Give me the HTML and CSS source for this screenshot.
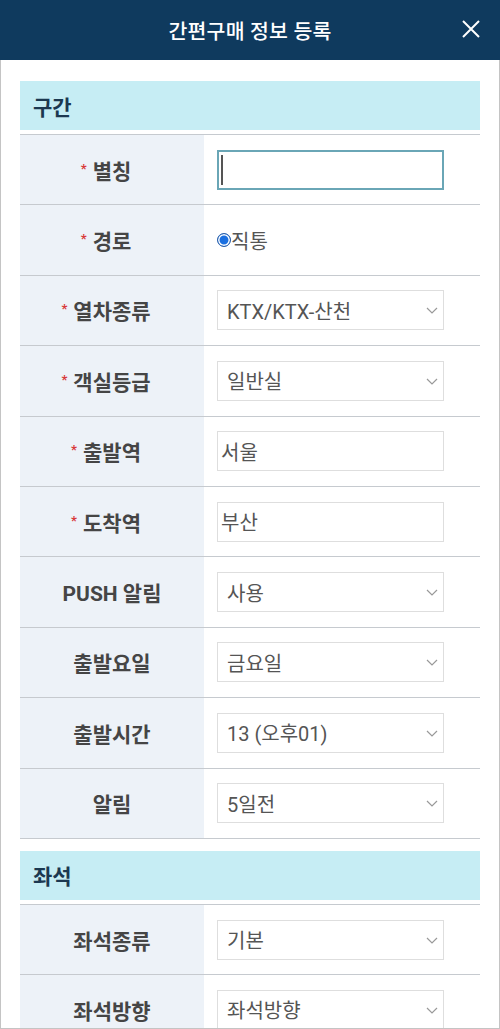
FILE: index.html
```html
<!DOCTYPE html>
<html lang="ko">
<head>
<meta charset="utf-8">
<title>간편구매 정보 등록</title>
<link rel="stylesheet" href="styles.css">
</head>
<body>
<div class="page">
  <header class="top">
    <h1 class="top-title">간편구매 정보 등록</h1>
    <span class="close" aria-label="닫기">
      <svg width="20" height="20" viewBox="0 0 20 20"><path d="M2 2 L18 18 M18 2 L2 18" stroke="#fff" stroke-width="2" fill="none"/></svg>
    </span>
  </header>
  <main class="content">
    <section class="sec">
      <h2 class="sec-title">구간</h2>
      <div class="table">
        <div class="row">
          <div class="label"><span class="req">별칭</span></div>
          <div class="val"><div class="field focus"><span class="caret"></span></div></div>
        </div>
        <div class="row">
          <div class="label"><span class="req">경로</span></div>
          <div class="val"><span class="radio"></span><span class="radio-text">직통</span></div>
        </div>
        <div class="row">
          <div class="label"><span class="req">열차종류</span></div>
          <div class="val"><div class="field select">KTX/KTX-산천<svg class="chev" width="12" height="7" viewBox="0 0 12 7"><path d="M1 1 L6 6 L11 1" stroke="#999" stroke-width="1.2" fill="none"/></svg></div></div>
        </div>
        <div class="row">
          <div class="label"><span class="req">객실등급</span></div>
          <div class="val"><div class="field select">일반실<svg class="chev" width="12" height="7" viewBox="0 0 12 7"><path d="M1 1 L6 6 L11 1" stroke="#999" stroke-width="1.2" fill="none"/></svg></div></div>
        </div>
        <div class="row">
          <div class="label"><span class="req">출발역</span></div>
          <div class="val"><div class="field">서울</div></div>
        </div>
        <div class="row">
          <div class="label"><span class="req">도착역</span></div>
          <div class="val"><div class="field">부산</div></div>
        </div>
        <div class="row">
          <div class="label"><span>PUSH 알림</span></div>
          <div class="val"><div class="field select">사용<svg class="chev" width="12" height="7" viewBox="0 0 12 7"><path d="M1 1 L6 6 L11 1" stroke="#999" stroke-width="1.2" fill="none"/></svg></div></div>
        </div>
        <div class="row">
          <div class="label"><span>출발요일</span></div>
          <div class="val"><div class="field select">금요일<svg class="chev" width="12" height="7" viewBox="0 0 12 7"><path d="M1 1 L6 6 L11 1" stroke="#999" stroke-width="1.2" fill="none"/></svg></div></div>
        </div>
        <div class="row">
          <div class="label"><span>출발시간</span></div>
          <div class="val"><div class="field select">13 (오후01)<svg class="chev" width="12" height="7" viewBox="0 0 12 7"><path d="M1 1 L6 6 L11 1" stroke="#999" stroke-width="1.2" fill="none"/></svg></div></div>
        </div>
        <div class="row">
          <div class="label"><span>알림</span></div>
          <div class="val"><div class="field select">5일전<svg class="chev" width="12" height="7" viewBox="0 0 12 7"><path d="M1 1 L6 6 L11 1" stroke="#999" stroke-width="1.2" fill="none"/></svg></div></div>
        </div>
      </div>
    </section>
    <section class="sec sec-next">
      <h2 class="sec-title">좌석</h2>
      <div class="table">
        <div class="row">
          <div class="label"><span>좌석종류</span></div>
          <div class="val"><div class="field select">기본<svg class="chev" width="12" height="7" viewBox="0 0 12 7"><path d="M1 1 L6 6 L11 1" stroke="#999" stroke-width="1.2" fill="none"/></svg></div></div>
        </div>
        <div class="row">
          <div class="label"><span>좌석방향</span></div>
          <div class="val"><div class="field select">좌석방향<svg class="chev" width="12" height="7" viewBox="0 0 12 7"><path d="M1 1 L6 6 L11 1" stroke="#999" stroke-width="1.2" fill="none"/></svg></div></div>
        </div>
      </div>
    </section>
  </main>
</div>
</body>
</html>
```

FILE: styles.css
```css
* { box-sizing: border-box; }
html, body { margin: 0; padding: 0; background: #fff; }
body {
  font-family: Roboto, "Noto Sans CJK KR", "Noto Sans", sans-serif;
  color: #444;
}
.page {
  width: 500px;
  height: 1029px;
  display: flex;
  flex-direction: column;
  overflow: hidden;
}
.top {
  height: 60px;
  flex: none;
  background: #0f3a5e;
  display: flex;
  align-items: center;
  justify-content: center;
  position: relative;
}
.top-title {
  margin: 0;
  font-size: 20.5px;
  font-weight: 500;
  color: #fff;
  letter-spacing: 0.2px;
}
.close {
  position: absolute;
  right: 19px;
  top: 19px;
  width: 20px;
  height: 20px;
  display: block;
}
.close svg { display: block; }
.content {
  flex: 1;
  border: 1px solid #c4c4c4;
  border-top: none;
  padding: 21px 19px 0;
  overflow: hidden;
}
.sec-next { margin-top: 12px; }
.sec-title {
  margin: 0 0 4px;
  height: 49px;
  background: #c6edf4;
  font-size: 21px;
  font-weight: 700;
  color: #1b3850;
  display: flex;
  align-items: center;
  padding-left: 13px;
}
.table {
  border-top: 1px solid #c6cacf;
}
.row {
  display: grid;
  grid-template-columns: 184px 1fr;
  height: 70.4px;
  border-bottom: 1px solid #c6cacf;
}
.label {
  background: #edf2f8;
  display: flex;
  align-items: center;
  justify-content: center;
  font-size: 21px;
  font-weight: 700;
  color: #454545;
}
.label span { position: relative; }
.req::before {
  content: "*";
  position: absolute;
  right: calc(100% + 6px);
  top: 6px;
  font-size: 13px;
  color: #d83a3a;
  font-weight: 700;
}
.val {
  display: flex;
  align-items: center;
  padding-left: 13px;
}
.field {
  width: 227px;
  height: 40px;
  border: 1px solid #dedede;
  background: #fff;
  display: flex;
  align-items: center;
  padding-left: 3px;
  font-size: 20px;
  color: #555;
  position: relative;
}
.field.select { padding-left: 9px; }
.field.focus {
  border: 2px solid #6aa6b6;
  padding-left: 2px;
}
.caret {
  width: 2px;
  height: 30px;
  background: #555;
}
.chev {
  position: absolute;
  right: 5px;
  top: 16px;
}
.radio {
  width: 14px;
  height: 14px;
  border-radius: 50%;
  border: 1.5px solid #2a5fa8;
  background: #1a6fe0;
  box-shadow: inset 0 0 0 1.5px #fff;
  margin-left: 0;
}
.radio-text {
  font-size: 20px;
  color: #555;
  margin-left: 0;
}
```
